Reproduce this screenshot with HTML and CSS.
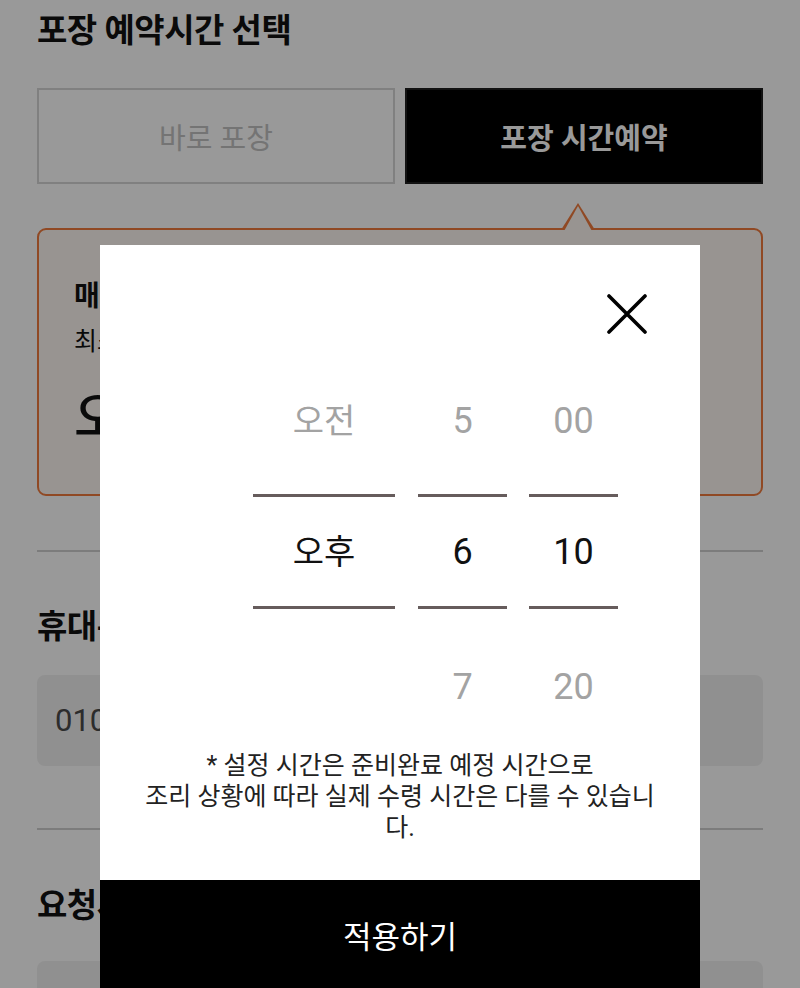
FILE: index.html
```html
<!DOCTYPE html>
<html lang="ko">
<head>
<meta charset="utf-8">
<title>포장 예약시간 선택</title>
<link rel="stylesheet" href="styles.css">
</head>
<body>
<main class="page">
  <h1 class="title">포장 예약시간 선택</h1>
  <div class="tabs">
    <button class="tab">바로 포장</button>
    <button class="tab tab-active">포장 시간예약</button>
  </div>
  <div class="tip">
    <p class="tip-head">매장 준비시간 안내</p>
    <p class="tip-sub">최소 20분 이후부터 예약 가능합니다.</p>
    <p class="tip-time">오후 6:10</p>
  </div>
  <hr class="rule">
  <h2 class="label">휴대폰 번호</h2>
  <div class="field">010-1234-5678</div>
  <hr class="rule rule-2">
  <h2 class="label label-2">요청사항</h2>
  <div class="field field-2"></div>
</main>

<div class="overlay"></div>
<section class="modal">
  <div class="modal-head">
    <svg class="close" viewBox="0 0 40 40" width="40" height="40" aria-label="닫기">
      <path d="M2 2 L38 38 M38 2 L2 38" stroke="#000" stroke-width="3.6" stroke-linecap="round" fill="none"/>
    </svg>
  </div>
  <div class="picker">
    <div class="col col-ampm">
      <div class="item">오전</div>
      <div class="item sel">오후</div>
      <div class="item"></div>
    </div>
    <div class="col col-num">
      <div class="item">5</div>
      <div class="item sel">6</div>
      <div class="item">7</div>
    </div>
    <div class="col col-num">
      <div class="item">00</div>
      <div class="item sel">10</div>
      <div class="item">20</div>
    </div>
  </div>
  <p class="note">* 설정 시간은 준비완료 예정 시간으로<br>조리 상황에 따라 실제 수령 시간은 다를 수 있습니다.</p>
  <button class="apply">적용하기</button>
</section>
</body>
</html>
```
FILE: styles.css
```css
* { box-sizing: border-box; }
html, body { margin: 0; padding: 0; }
body {
  width: 800px;
  height: 988px;
  overflow: hidden;
  background: #fff;
  font-family: "Roboto", "Noto Sans CJK KR", sans-serif;
  color: #111;
}
.page { padding: 0 37px; }
.title {
  margin: 11px 0 0;
  font-size: 33px;
  line-height: 40px;
  font-weight: 700;
  letter-spacing: -0.5px;
}
.tabs {
  margin-top: 37px;
  display: grid;
  grid-template-columns: 1fr 1fr;
  gap: 10px;
}
.tab {
  height: 96px;
  border: 2px solid #d6d6d6;
  background: #fff;
  color: #c2c2c2;
  font-family: inherit;
  font-size: 29px;
  font-weight: 400;
}
.tab-active {
  background: #000;
  border-color: #1e1e1e;
  color: #fff;
  font-weight: 700;
}
.tip {
  position: relative;
  margin-top: 44px;
  height: 268px;
  border: 2px solid #f07a3c;
  border-radius: 9px;
  background: #fdf7f2;
  padding: 47px 35px 0;
}
.tip::before, .tip::after {
  content: "";
  position: absolute;
}
.tip::before {
  left: 522px;
  top: -27px;
  width: 34px;
  height: 27px;
  background: #f07a3c;
  clip-path: polygon(50% 0, 100% 100%, 0 100%);
}
.tip::after {
  left: 524.5px;
  top: -24px;
  width: 29px;
  height: 26px;
  background: #fdf7f2;
  clip-path: polygon(50% 0, 100% 100%, 0 100%);
}
.tip p { margin: 0; }
.tip-head { font-size: 28px; line-height: 40px; font-weight: 700; }
.tip-sub { margin-top: 8px !important; font-size: 25px; line-height: 34px; }
.tip-time { margin-top: 30px !important; font-size: 52px; line-height: 60px; font-weight: 500; }
.rule {
  margin: 54px 0 0;
  border: 0;
  border-top: 2px solid #cfcfcf;
}
.rule-2 { margin-top: 62px; }
.label {
  margin: 55px 0 0;
  font-size: 33px;
  line-height: 40px;
  font-weight: 700;
  letter-spacing: -0.5px;
}
.label-2 { margin-top: 56px; }
.field {
  margin-top: 28px;
  height: 91px;
  border-radius: 8px;
  background: #f1f1f1;
  padding-left: 18px;
  display: flex;
  align-items: center;
  font-size: 31px;
  color: #4a4a4a;
}
.field-2 { margin-top: 35px; height: 60px; border-radius: 8px 8px 0 0; }

.overlay {
  position: fixed;
  inset: 0;
  background: rgba(0, 0, 0, 0.4);
}
.modal {
  position: fixed;
  left: 100px;
  top: 245px;
  width: 600px;
  bottom: 0;
  background: #fff;
  display: flex;
  flex-direction: column;
}
.modal-head {
  display: flex;
  justify-content: flex-end;
  padding: 49px 53px 0 0;
}
.close { display: block; }
.picker {
  margin: 20px 0 0 153px;
  display: flex;
  gap: 22px;
}
.col { display: flex; flex-direction: column; }
.col-ampm { width: 142px; font-size: 34px; }
.col-num { width: 89px; font-size: 36px; }
.col-ampm + .col-num { margin-left: 1px; }
.item {
  height: 133px;
  display: flex;
  align-items: center;
  justify-content: center;
  color: #a3a3a3;
  line-height: 1;
}
.item.sel {
  height: 115px;
  margin: 7px 0 11px;
  border-top: 3px solid #665c5c;
  border-bottom: 3px solid #665c5c;
  color: #111;
}
.note {
  margin: -3px 0 0;
  padding: 0 40px;
  text-align: center;
  font-size: 25px;
  line-height: 31px;
  color: #222;
}
.apply {
  margin-top: auto;
  height: 108px;
  border: 0;
  background: #000;
  color: #fff;
  font-family: inherit;
  font-size: 31px;
  padding: 0;
}
```
